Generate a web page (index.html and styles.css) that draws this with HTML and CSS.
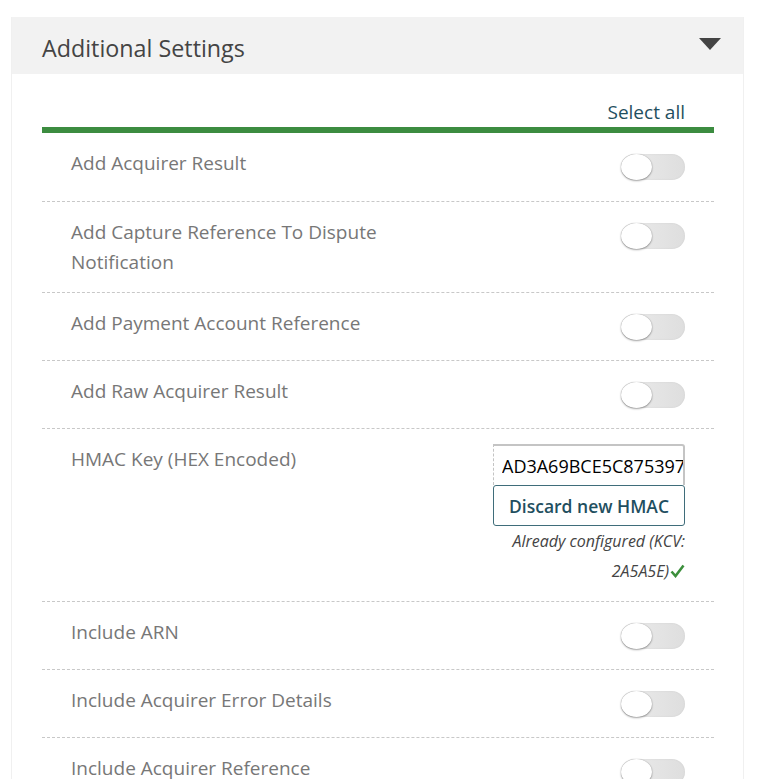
FILE: index.html
```html
<!DOCTYPE html>
<html lang="en">
<head>
<meta charset="utf-8">
<title>Additional Settings</title>
<link rel="stylesheet" href="styles.css">
</head>
<body>
<div class="card">
  <div class="card-header">
    <h2 class="card-title">Additional Settings</h2>
    <svg class="caret" width="22" height="12" viewBox="0 0 22 12"><path d="M0 0 L22 0 L11 12 Z" fill="#444"/></svg>
  </div>
  <div class="card-body">
    <div class="select-row"><a class="select-all">Select all</a></div>
    <div class="setting">
      <div class="label">Add Acquirer Result</div>
      <div class="control"><span class="toggle"><span class="knob"></span></span></div>
    </div>
    <div class="setting">
      <div class="label">Add Capture Reference To Dispute Notification</div>
      <div class="control"><span class="toggle"><span class="knob"></span></span></div>
    </div>
    <div class="setting">
      <div class="label">Add Payment Account Reference</div>
      <div class="control"><span class="toggle"><span class="knob"></span></span></div>
    </div>
    <div class="setting">
      <div class="label">Add Raw Acquirer Result</div>
      <div class="control"><span class="toggle"><span class="knob"></span></span></div>
    </div>
    <div class="setting">
      <div class="label">HMAC Key (HEX Encoded)</div>
      <div class="hmac">
        <input class="hmac-input" type="text" value="AD3A69BCE5C875397A1B2C3D4E5F">
        <button class="btn-discard">Discard new HMAC</button>
        <div class="hmac-note">Already configured (KCV: 2A5A5E)<svg class="check" width="15" height="14" viewBox="0 0 15 14"><path d="M1.5 7.5 L5.5 12 L13.5 1.5" fill="none" stroke="#3c8f3c" stroke-width="2.6" stroke-linejoin="miter"/></svg></div>
      </div>
    </div>
    <div class="setting">
      <div class="label">Include ARN</div>
      <div class="control"><span class="toggle"><span class="knob"></span></span></div>
    </div>
    <div class="setting">
      <div class="label">Include Acquirer Error Details</div>
      <div class="control"><span class="toggle"><span class="knob"></span></span></div>
    </div>
    <div class="setting">
      <div class="label">Include Acquirer Reference</div>
      <div class="control"><span class="toggle"><span class="knob"></span></span></div>
    </div>
  </div>
</div>
</body>
</html>
```
FILE: styles.css
```css
html, body {
  margin: 0;
  padding: 0;
  background: #fff;
}
body {
  padding: 17px 24px 0 11px;
  font-family: "Open Sans", "Liberation Sans", sans-serif;
  color: #444;
}
.card {
  width: 733px;
  border: 1px solid #f0f0f0;
  border-top: none;
  box-sizing: border-box;
}
.card-header {
  height: 57px;
  background: #f2f2f2;
  display: flex;
  align-items: center;
  justify-content: space-between;
  padding: 0 22px 0 30px;
}
.card-title {
  margin: 0;
  font-size: 23.3px;
  font-weight: 400;
  color: #444;
  line-height: 30px;
  padding-top: 4px;
}
.caret {
  display: block;
  margin-top: -3px;
}
.card-body {
  padding: 0 29px 0 30px;
}
.select-row {
  padding-top: 23px;
  text-align: right;
  padding-right: 29px;
  border-bottom: 6px solid #3c8c40;
}
.select-all {
  font-size: 19px;
  line-height: 30px;
  color: #1f4f60;
  cursor: pointer;
}
.setting {
  display: flex;
  justify-content: space-between;
  padding: 15px 29px 15px 29px;
  border-bottom: 1px dashed #c8c8c8;
}
.select-row + .setting {
  padding-bottom: 16px;
}
.label {
  max-width: 312px;
  font-size: 19px;
  line-height: 30px;
  color: #777;
}
.control {
  height: 37px;
  display: flex;
  align-items: center;
}
.toggle {
  display: block;
  position: relative;
  width: 64px;
  height: 26px;
  border-radius: 13px;
  background: linear-gradient(to right, #ececec, #dedede);
  box-shadow: inset 0 0 2px rgba(0,0,0,0.08);
}
.knob {
  position: absolute;
  left: 0;
  top: 0;
  width: 31px;
  height: 26px;
  border-radius: 50%;
  background: #fff;
  box-shadow: 0 1px 2px rgba(0,0,0,0.35), 0 0 1px rgba(0,0,0,0.3);
}
.hmac {
  width: 192px;
  display: flex;
  flex-direction: column;
  align-items: stretch;
}
.hmac-input {
  height: 41px;
  box-sizing: border-box;
  margin: 0;
  padding: 0 0 0 8px;
  font-family: "Open Sans", "Liberation Sans", sans-serif;
  font-size: 18px;
  color: #000;
  background: #fff;
  border-top: 2px solid #c4c4c4;
  border-right: 2px solid #c4c4c4;
  border-left: 1px dashed #c4c4c4;
  border-bottom: none;
  border-top-right-radius: 3px;
  outline: none;
}
.btn-discard {
  height: 41px;
  margin: 0;
  background: #fff;
  border: 1px solid #3f6d7a;
  border-radius: 3px;
  font-family: "Open Sans", "Liberation Sans", sans-serif;
  font-size: 17.5px;
  font-weight: 600;
  color: #1f4f60;
  padding: 0;
}
.hmac-note {
  text-align: right;
  font-size: 16px;
  font-style: italic;
  line-height: 30px;
  color: #444;
}
.check {
  vertical-align: -1px;
  margin-left: 1px;
}
```
